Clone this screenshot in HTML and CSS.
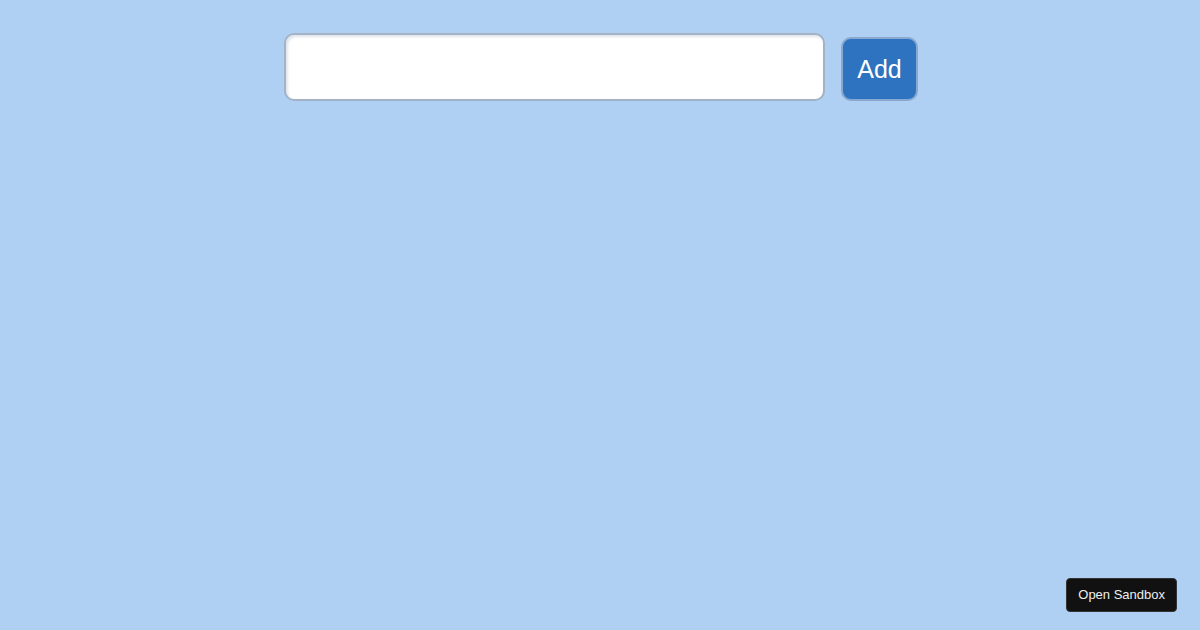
FILE: index.html
```html
<!DOCTYPE html>
<html>
<head>
<meta charset="utf-8">
<link rel="stylesheet" href="styles.css">
</head>
<body>
<div class="bar">
  <input class="field" type="text">
  <button class="add">Add</button>
</div>
<a class="sandbox">Open Sandbox</a>
</body>
</html>
```
FILE: styles.css
```css
html, body {
  margin: 0;
  height: 100%;
}
body {
  background: #b0d0f3;
  font-family: "Liberation Sans", Arial, sans-serif;
  position: relative;
}
.bar {
  display: flex;
  justify-content: center;
  align-items: flex-end;
  gap: 16px;
  padding-top: 33px;
  padding-left: 2px;
}
.field {
  box-sizing: border-box;
  width: 541px;
  height: 68px;
  border: 2px solid #a3b2c4;
  border-radius: 10px;
  background: #fff;
  box-shadow: inset 2px 2px 3px #dfe5ec;
  margin: 0;
  outline: none;
}
.add {
  box-sizing: border-box;
  width: 77px;
  height: 64px;
  border: 2px solid #88a8cf;
  border-radius: 10px;
  background: #2e73c0;
  color: #fff;
  font-family: "Liberation Sans", Arial, sans-serif;
  font-size: 25px;
  margin: 0;
  padding: 0;
}
.sandbox {
  position: absolute;
  right: 23px;
  bottom: 18px;
  background: #111;
  color: #eee;
  font-size: 13px;
  font-family: "Liberation Sans", Arial, sans-serif;
  padding: 9px 11px;
  border-radius: 4px;
  border: 1px solid #333;
  line-height: 14px;
}
```
